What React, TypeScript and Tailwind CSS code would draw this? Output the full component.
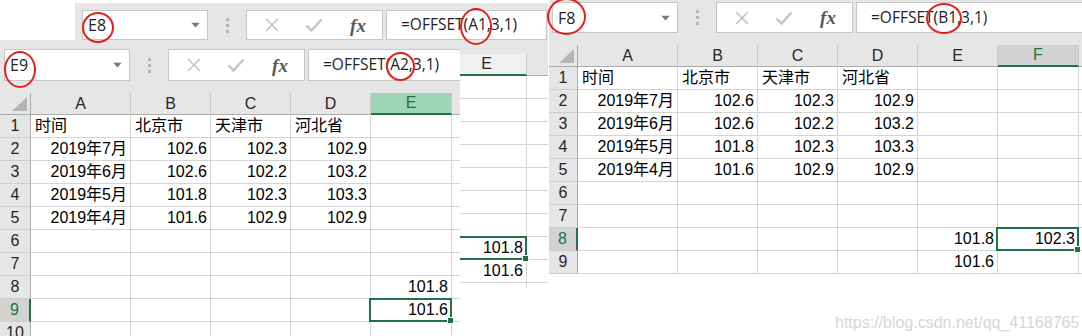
import React from 'react';

type Cells = Record<string, string>;

const BASE: Cells = {
  A1: '时间', B1: '北京市', C1: '天津市', D1: '河北省',
  A2: '2019年7月', B2: '102.6', C2: '102.3', D2: '102.9',
  A3: '2019年6月', B3: '102.6', C3: '102.2', D3: '103.2',
  A4: '2019年5月', B4: '101.8', C4: '102.3', D4: '103.3',
  A5: '2019年4月', B5: '101.6', C5: '102.9', D5: '102.9',
  E8: '101.8', E9: '101.6',
};

interface WinProps {
  posClass: string;
  toolbarClass: string;
  boxClass: string;
  formulaClass: string;
  name: string;
  formula: string;
  gridClass: string;
  cols: string[];
  rowCount: number;
  selCol: string;
  selRow: number;
  headerSelClass: string;
  cells: Cells;
}

function XIcon() {
  return (
    <svg width="16" height="16" viewBox="0 0 16 16">
      <path d="M2 2 L14 14 M14 2 L2 14" stroke="#c3c3c3" strokeWidth="1.6" fill="none" />
    </svg>
  );
}

function CheckIcon() {
  return (
    <svg width="18" height="16" viewBox="0 0 18 16">
      <path d="M1.5 8.5 L6.5 13.5 L16.5 2.5" stroke="#c3c3c3" strokeWidth="2.4" fill="none" />
    </svg>
  );
}

function DropArrow() {
  return (
    <svg width="9" height="5" viewBox="0 0 9 5" className="absolute right-[7px] top-1/2 -translate-y-1/2">
      <path d="M0 0 L9 0 L4.5 5 Z" fill="#7a7a7a" />
    </svg>
  );
}

function Corner() {
  return (
    <svg width="15" height="14" viewBox="0 0 15 14" className="absolute right-[3px] bottom-[3px]">
      <path d="M15 0 L15 14 L0 14 Z" fill="#b5b5b5" />
    </svg>
  );
}

function ExcelWindow(p: WinProps) {
  const rows = Array.from({ length: p.rowCount }, (_, i) => i + 1);
  return (
    <div className={`absolute overflow-hidden bg-white ${p.posClass}`}>
      <div className={`flex items-start bg-[#e6e6e6] font-['Open_Sans','Liberation_Sans',sans-serif] text-[15.5px] text-[#222] ${p.toolbarClass}`}>
        <div className={`relative w-[126px] shrink-0 bg-white border border-[#c6c6c6] flex items-center pl-[5px] text-[16px] ${p.boxClass}`}>
          <span>{p.name}</span>
          <DropArrow />
        </div>
        <div className={`w-[38px] shrink-0 flex flex-col items-center justify-center gap-[3px] ${p.boxClass}`}>
          <div className="w-[3px] h-[3px] bg-[#b4b4b4]" />
          <div className="w-[3px] h-[3px] bg-[#b4b4b4]" />
          <div className="w-[3px] h-[3px] bg-[#b4b4b4]" />
        </div>
        <div className={`w-[137px] shrink-0 bg-white border border-[#c6c6c6] flex items-center ${p.boxClass}`}>
          <div className="w-[46px] flex justify-center pl-[4px]"><XIcon /></div>
          <div className="w-[42px] flex justify-center"><CheckIcon /></div>
          <div className="w-[46px] flex justify-center font-['Liberation_Serif',serif] italic font-bold text-[19px] text-[#595959] leading-none">fx</div>
        </div>
        <div className={`ml-[3px] bg-white border border-[#c6c6c6] flex items-center pl-[14px] whitespace-nowrap ${p.boxClass} ${p.formulaClass}`}>
          {p.formula}
        </div>
      </div>
      <div className={`grid font-['Liberation_Sans','Noto_Sans_CJK_SC',sans-serif] text-[16px] text-black ${p.gridClass}`}>
        <div className="relative h-[22px] bg-[#e6e6e6] border-r border-b border-r-[#ababab] border-b-[#ababab]">
          <Corner />
        </div>
        {p.cols.map((c) => (
          <div
            key={c}
            className={`h-[22px] flex items-center justify-center border-r border-r-[#cacaca] ${
              c === p.selCol ? p.headerSelClass : 'bg-[#e6e6e6] text-[#262626] border-b border-b-[#ababab]'
            }`}
          >
            {c}
          </div>
        ))}
        {rows.map((r) => (
          <React.Fragment key={r}>
            <div
              className={`h-[23px] flex items-center justify-center border-b border-b-[#cfcfcf] ${
                r === p.selRow
                  ? 'bg-[#d2d2d2] text-[#217346] border-r-2 border-r-[#217346]'
                  : 'bg-[#e6e6e6] text-[#262626] border-r border-r-[#ababab]'
              }`}
            >
              {r}
            </div>
            {p.cols.map((c) => {
              const v = p.cells[`${c}${r}`];
              const sel = c === p.selCol && r === p.selRow;
              return (
                <div
                  key={c}
                  className={`relative h-[23px] flex items-center px-[3px] whitespace-nowrap border-r border-b border-[#d4d4d4] ${
                    r === 1 ? 'justify-start pl-[4px]' : 'justify-end'
                  }`}
                >
                  {v}
                  {sel && (
                    <div className="absolute left-[-2px] top-[-1px] right-[-1px] bottom-[-1px] border-2 border-[#217346] z-10">
                      <div className="absolute right-[-4px] bottom-[-4px] w-[7px] h-[7px] bg-[#217346] border border-white" />
                    </div>
                  )}
                </div>
              );
            })}
          </React.Fragment>
        ))}
      </div>
    </div>
  );
}

function Ring({ cls }: { cls: string }) {
  return <div className={`absolute rounded-[50%] border-[2.5px] border-[#e3201c] z-30 ${cls}`} />;
}

export default function App() {
  return (
    <div className="relative w-[1082px] h-[336px] bg-white overflow-hidden">
      <ExcelWindow
        posClass="left-[75px] top-[3px] w-[473px] h-[285px] z-0"
        toolbarClass="h-[51px] pt-[7px] pl-[7px]"
        boxClass="h-[30px]"
        formulaClass="flex-1 mr-[1px]"
        name="E8"
        formula="=OFFSET(A1,3,1)"
        gridClass="grid-cols-[32px_100px_80px_80px_80px_80px_80px]"
        cols={['A', 'B', 'C', 'D', 'E', 'F']}
        rowCount={10}
        selCol="E"
        selRow={8}
        headerSelClass="bg-[#f0f0f0] text-[#262626] border-b-2 border-b-[#217346]"
        cells={BASE}
      />
      <ExcelWindow
        posClass="left-0 top-[40px] w-[460px] h-[296px] z-10"
        toolbarClass="h-[53px] pt-[9px] pl-[4px]"
        boxClass="h-[32px]"
        formulaClass="w-[400px] shrink-0"
        name="E9"
        formula="=OFFSET(A2,3,1)"
        gridClass="grid-cols-[31px_100px_80px_80px_80px_81px_80px]"
        cols={['A', 'B', 'C', 'D', 'E', 'F']}
        rowCount={10}
        selCol="E"
        selRow={9}
        headerSelClass="bg-[#9fd5b7] text-[#217346] border-b-2 border-b-[#217346]"
        cells={BASE}
      />
      <ExcelWindow
        posClass="left-[549px] top-0 w-[533px] h-[275px] z-20"
        toolbarClass="h-[45px] pt-[2px] pl-[3px]"
        boxClass="h-[31px]"
        formulaClass="w-[400px] shrink-0"
        name="F8"
        formula="=OFFSET(B1,3,1)"
        gridClass="grid-cols-[29px_100px_80px_80px_80px_80px_81px_80px]"
        cols={['A', 'B', 'C', 'D', 'E', 'F', 'G']}
        rowCount={9}
        selCol="F"
        selRow={8}
        headerSelClass="bg-[#d2d2d2] text-[#217346] border-b-2 border-b-[#217346]"
        cells={{ ...BASE, F8: '102.3' }}
      />
      <Ring cls="left-[82px] top-[12px] w-[32px] h-[31px]" />
      <Ring cls="left-[460px] top-[8px] w-[32px] h-[37px]" />
      <Ring cls="left-[4px] top-[51px] w-[32px] h-[37px]" />
      <Ring cls="left-[386px] top-[52px] w-[29px] h-[29px]" />
      <Ring cls="left-[547px] top-[-2px] w-[39px] h-[37px]" />
      <Ring cls="left-[926px] top-[3px] w-[36px] h-[31px]" />
      <div className="absolute left-[835px] top-[311px] z-30 font-['Liberation_Sans',sans-serif] text-[16px] text-[#d6d6d6] whitespace-nowrap">
        https://blog.csdn.net/qq_41168765
      </div>
    </div>
  );
}
